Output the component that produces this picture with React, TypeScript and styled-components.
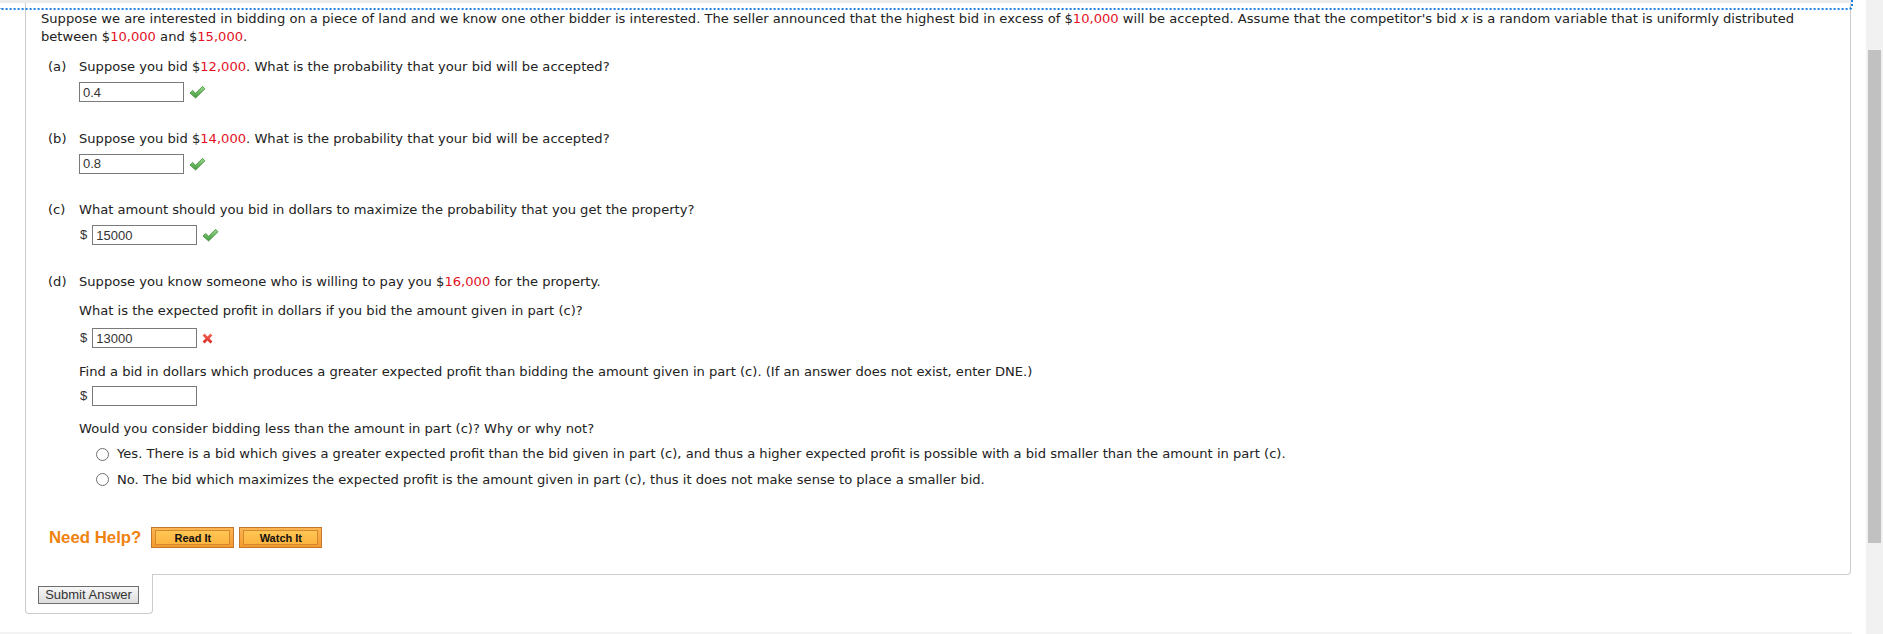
import React from "react";
import styled, { createGlobalStyle } from "styled-components";

const GlobalStyle = createGlobalStyle`
  html, body {
    margin: 0;
    padding: 0;
    background: #ffffff;
    overflow: hidden;
  }
  body {
    font-family: "DejaVu Sans", Verdana, sans-serif;
    color: #222222;
  }
`;

const Page = styled.div`
  display: flex;
  width: 1883px;
  height: 634px;
`;

const Main = styled.div`
  position: relative;
  width: 1866px;
`;

const TopStrip = styled.div`
  width: 1853px;
  height: 3px;
  background: #ececec;
`;

const FocusOutline = styled.div`
  position: absolute;
  left: 0;
  top: -20px;
  width: 1851px;
  height: 28px;
  border-bottom: 2px dotted #1f80e0;
  border-right: 2px dotted #1f80e0;
  border-bottom-right-radius: 4px;
  pointer-events: none;
`;

const Panel = styled.div`
  margin-left: 25px;
  width: 1826px;
  box-sizing: border-box;
  border: 1px solid #cccccc;
  border-top: none;
  border-bottom-right-radius: 4px;
  padding: 7px 15px 26px 15px;
  font-size: 13.1px;
  line-height: 18px;
`;

const Intro = styled.p`
  margin: 0;
  white-space: nowrap;
`;

const Num = styled.span`
  color: #e3101f;
`;

const Var = styled.em`
  font-style: italic;
`;

const PartList = styled.div`
  margin-top: 12px;
  padding-left: 7px;
`;

const Part = styled.div`
  display: flex;
  margin-bottom: 27.5px;
  &:last-child {
    margin-bottom: 0;
  }
`;

const Label = styled.div`
  width: 31px;
  flex-shrink: 0;
`;

const Body = styled.div`
  flex: 1;
`;

const Prompt = styled.div<{ $gap?: number }>`
  margin-top: ${(p) => p.$gap ?? 0}px;
  height: 18px;
  white-space: nowrap;
`;

const AnswerRow = styled.div<{ $gap?: number }>`
  display: flex;
  align-items: center;
  height: 20px;
  margin-top: ${(p) => p.$gap ?? 6}px;
`;

const Dollar = styled.span`
  font-family: "Liberation Sans", Arial, sans-serif;
  font-size: 13px;
  color: #333333;
  margin-right: 5px;
  margin-left: 1px;
`;

const AnswerInput = styled.input`
  width: 105px;
  height: 20px;
  box-sizing: border-box;
  border: 1px solid #7a7a7a;
  border-radius: 0;
  padding: 0 3px;
  margin: 0;
  font-family: "Liberation Sans", Arial, sans-serif;
  font-size: 13px;
  color: #333333;
  background: #ffffff;
  outline: none;
`;

const Mark = styled.span`
  display: flex;
  margin-left: 5px;
`;

const RadioList = styled.div`
  margin-top: 7px;
  padding-left: 17px;
  display: flex;
  flex-direction: column;
  gap: 7.5px;
`;

const RadioRow = styled.label`
  display: flex;
  align-items: center;
  height: 18px;
  gap: 8px;
  white-space: nowrap;
`;

const RadioCircle = styled.span`
  width: 13px;
  height: 13px;
  box-sizing: border-box;
  border: 1px solid #707070;
  border-radius: 50%;
  background: #ffffff;
  flex-shrink: 0;
`;

const HelpRow = styled.div`
  display: flex;
  align-items: center;
  margin-top: 38.5px;
  padding-left: 7px;
  height: 21px;
`;

const HelpTitle = styled.span`
  font-family: "Liberation Sans", Arial, sans-serif;
  font-weight: bold;
  font-size: 16.8px;
  color: #f0820f;
  margin-right: 10px;
  margin-left: 1px;
`;

const HelpButton = styled.button`
  width: 83px;
  height: 21px;
  box-sizing: border-box;
  padding: 2px 3px;
  margin: 0 5px 0 0;
  border: 1px solid #c2772f;
  background: linear-gradient(#fbb552, #f59a2e);
  cursor: pointer;
`;

const HelpButtonFace = styled.span`
  display: flex;
  align-items: center;
  justify-content: center;
  height: 100%;
  box-sizing: border-box;
  border: 1px solid #d5892e;
  background: linear-gradient(#ffc654, #fdb440);
  font-family: "Liberation Sans", Arial, sans-serif;
  font-weight: bold;
  font-size: 11px;
  color: #111111;
`;

const Tab = styled.div`
  margin-left: 25px;
  margin-top: -1px;
  width: 128px;
  box-sizing: border-box;
  border: 1px solid #cccccc;
  border-top: none;
  border-radius: 0 0 4px 4px;
  background: #ffffff;
  padding: 12px 0 9px 12px;
`;

const SubmitButton = styled.button`
  display: block;
  width: 101px;
  height: 18px;
  box-sizing: border-box;
  padding: 0;
  margin: 0;
  border: 1px solid #6e6e6e;
  background: linear-gradient(#f7f7f7, #dcdcdc);
  font-family: "Liberation Sans", Arial, sans-serif;
  font-size: 13px;
  line-height: 16px;
  color: #333333;
`;

const BottomStrip = styled.div`
  margin-top: 18px;
  width: 1852px;
  height: 2px;
  background: #f3f3f3;
`;

const ScrollTrack = styled.div`
  width: 17px;
  height: 634px;
  box-sizing: border-box;
  padding: 0 2px;
  background: #f1f1f1;
`;

const ScrollThumb = styled.div`
  margin-top: 50px;
  height: 493px;
  background: #c1c1c1;
`;

const CheckIcon = () => (
  <svg width="17" height="14" viewBox="0 0 17 14">
    <defs>
      <linearGradient id="chk" x1="0" y1="0" x2="0" y2="1">
        <stop offset="0" stopColor="#9fd98f" />
        <stop offset="1" stopColor="#3f9c3a" />
      </linearGradient>
    </defs>
    <path
      d="M1 8 L3.6 5.4 L6.6 8.3 L13.6 1.3 L16 3.8 L6.6 13 Z"
      fill="url(#chk)"
      stroke="#3b8a36"
      strokeWidth="0.8"
      strokeLinejoin="round"
    />
  </svg>
);

const CrossIcon = () => (
  <svg width="11" height="11" viewBox="0 0 11 11">
    <defs>
      <linearGradient id="crs" x1="0" y1="0" x2="0" y2="1">
        <stop offset="0" stopColor="#f56a5e" />
        <stop offset="1" stopColor="#d8261f" />
      </linearGradient>
    </defs>
    <path
      d="M0.6 2.6 L2.6 0.6 L5.5 3.5 L8.4 0.6 L10.4 2.6 L7.5 5.5 L10.4 8.4 L8.4 10.4 L5.5 7.5 L2.6 10.4 L0.6 8.4 L3.5 5.5 Z"
      fill="url(#crs)"
    />
  </svg>
);

const Answer = ({
  value,
  dollar,
  mark,
  gap,
}: {
  value: string;
  dollar?: boolean;
  mark?: "ok" | "bad";
  gap?: number;
}) => (
  <AnswerRow $gap={gap}>
    {dollar && <Dollar>$</Dollar>}
    <AnswerInput readOnly value={value} />
    {mark && <Mark>{mark === "ok" ? <CheckIcon /> : <CrossIcon />}</Mark>}
  </AnswerRow>
);

export default function App() {
  return (
    <>
      <GlobalStyle />
      <Page>
        <Main>
          <TopStrip />
          <FocusOutline />
          <Panel>
            <Intro>
              Suppose we are interested in bidding on a piece of land and we know one other
              bidder is interested. The seller announced that the highest bid in excess of $
              <Num>10,000</Num> will be accepted. Assume that the competitor's bid <Var>x</Var> is
              a random variable that is uniformly distributed
              <br />
              between $<Num>10,000</Num> and $<Num>15,000</Num>.
            </Intro>
            <PartList>
              <Part>
                <Label>(a)</Label>
                <Body>
                  <Prompt>
                    Suppose you bid $<Num>12,000</Num>. What is the probability that your bid will
                    be accepted?
                  </Prompt>
                  <Answer value="0.4" mark="ok" />
                </Body>
              </Part>
              <Part>
                <Label>(b)</Label>
                <Body>
                  <Prompt>
                    Suppose you bid $<Num>14,000</Num>. What is the probability that your bid will
                    be accepted?
                  </Prompt>
                  <Answer value="0.8" mark="ok" />
                </Body>
              </Part>
              <Part>
                <Label>(c)</Label>
                <Body>
                  <Prompt>
                    What amount should you bid in dollars to maximize the probability that you get
                    the property?
                  </Prompt>
                  <Answer value="15000" dollar mark="ok" />
                </Body>
              </Part>
              <Part>
                <Label>(d)</Label>
                <Body>
                  <Prompt>
                    Suppose you know someone who is willing to pay you $<Num>16,000</Num> for the
                    property.
                  </Prompt>
                  <Prompt $gap={11.5}>
                    What is the expected profit in dollars if you bid the amount given in part (c)?
                  </Prompt>
                  <Answer value="13000" dollar mark="bad" gap={8} />
                  <Prompt $gap={15}>
                    Find a bid in dollars which produces a greater expected profit than bidding the
                    amount given in part (c). (If an answer does not exist, enter DNE.)
                  </Prompt>
                  <Answer value="" dollar gap={5} />
                  <Prompt $gap={14}>
                    Would you consider bidding less than the amount in part (c)? Why or why not?
                  </Prompt>
                  <RadioList>
                    <RadioRow>
                      <RadioCircle />
                      Yes. There is a bid which gives a greater expected profit than the bid given
                      in part (c), and thus a higher expected profit is possible with a bid smaller
                      than the amount in part (c).
                    </RadioRow>
                    <RadioRow>
                      <RadioCircle />
                      No. The bid which maximizes the expected profit is the amount given in part
                      (c), thus it does not make sense to place a smaller bid.
                    </RadioRow>
                  </RadioList>
                </Body>
              </Part>
            </PartList>
            <HelpRow>
              <HelpTitle>Need Help?</HelpTitle>
              <HelpButton>
                <HelpButtonFace>Read It</HelpButtonFace>
              </HelpButton>
              <HelpButton>
                <HelpButtonFace>Watch It</HelpButtonFace>
              </HelpButton>
            </HelpRow>
          </Panel>
          <Tab>
            <SubmitButton>Submit Answer</SubmitButton>
          </Tab>
          <BottomStrip />
        </Main>
        <ScrollTrack>
          <ScrollThumb />
        </ScrollTrack>
      </Page>
    </>
  );
}
